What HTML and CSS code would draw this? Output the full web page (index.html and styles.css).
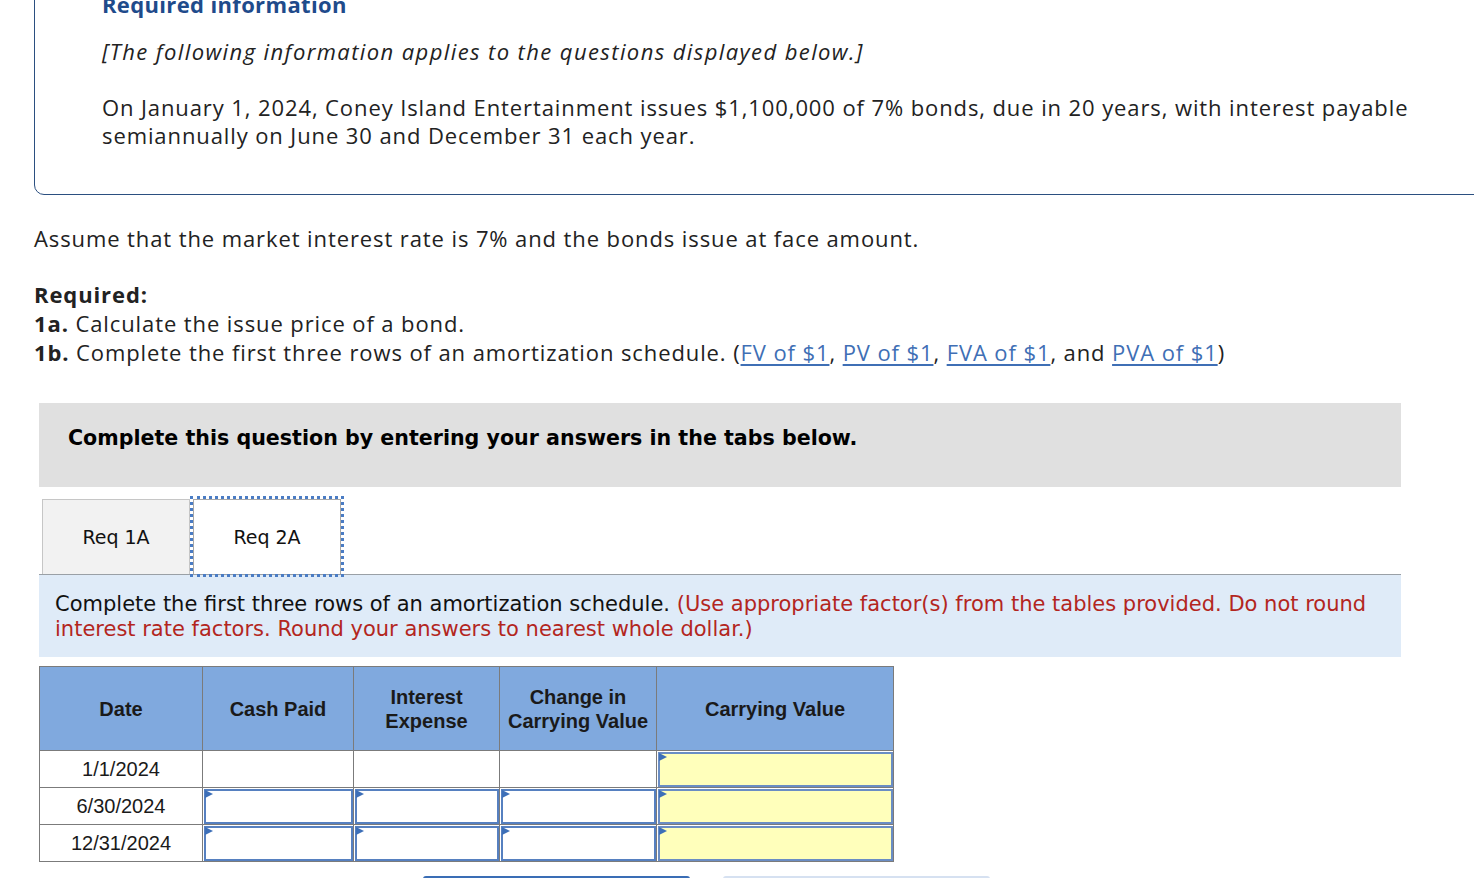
FILE: index.html
```html
<!DOCTYPE html>
<html>
<head>
<meta charset="utf-8">
<link rel="stylesheet" href="styles.css">
</head>
<body>
<div class="req-box">
  <h2 class="req-title">Required information</h2>
  <p class="req-note">[The following information applies to the questions displayed below.]</p>
  <p class="req-text">On January 1, 2024, Coney Island Entertainment issues $1,100,000 of 7% bonds, due in 20 years, with interest payable<br>semiannually on June 30 and December 31 each year.</p>
</div>

<p class="assume">Assume that the market interest rate is 7% and the bonds issue at face amount.</p>

<div class="required">
  <div class="bold">Required:</div>
  <div><b>1a.</b> Calculate the issue price of a bond.</div>
  <div><b>1b.</b> Complete the first three rows of an amortization schedule. (<a href="#">FV of $1</a>, <a href="#">PV of $1</a>, <a href="#">FVA of $1</a>, and <a href="#">PVA of $1</a>)</div>
</div>

<div class="panel">
  <div class="panel-head">Complete this question by entering your answers in the tabs below.</div>
  <div class="tabs">
    <div class="tab">Req 1A</div>
    <div class="tab active">Req 2A</div>
  </div>
  <div class="instr">Complete the first three rows of an amortization schedule. <span class="red">(Use appropriate factor(s) from the tables provided. Do not round<br>interest rate factors. Round your answers to nearest whole dollar.)</span></div>

  <table class="sched">
    <thead>
      <tr>
        <th class="c1">Date</th>
        <th class="c2">Cash Paid</th>
        <th class="c3">Interest<br>Expense</th>
        <th class="c4">Change in<br>Carrying Value</th>
        <th class="c5">Carrying Value</th>
      </tr>
    </thead>
    <tbody>
      <tr>
        <td class="date">1/1/2024</td>
        <td></td>
        <td></td>
        <td></td>
        <td class="in"><div class="field yellow"></div></td>
      </tr>
      <tr>
        <td class="date">6/30/2024</td>
        <td class="in"><div class="field"></div></td>
        <td class="in"><div class="field"></div></td>
        <td class="in"><div class="field"></div></td>
        <td class="in"><div class="field yellow"></div></td>
      </tr>
      <tr>
        <td class="date">12/31/2024</td>
        <td class="in"><div class="field"></div></td>
        <td class="in"><div class="field"></div></td>
        <td class="in"><div class="field"></div></td>
        <td class="in"><div class="field yellow"></div></td>
      </tr>
    </tbody>
  </table>

  <div class="nav">
    <div class="btn prev"></div>
    <div class="btn next"></div>
  </div>
</div>
</body>
</html>
```

FILE: styles.css
```css
html, body {
  margin: 0;
  padding: 0;
  background: #ffffff;
}
body {
  font-family: "Open Sans", "Lato", sans-serif;
  color: #222222;
  font-size: 22px;
  line-height: 28px;
  letter-spacing: 0.9px;
  overflow: hidden;
}
.req-box {
  margin: -25px -30px 0 34px;
  padding: 14px 40px 45px 67px;
  border: 1px solid #2b4f80;
  border-radius: 0 0 0 10px;
}
.req-title {
  margin: 0;
  font-size: 22px;
  line-height: 28px;
  font-weight: 700;
  letter-spacing: 0.35px;
  color: #1f4b8b;
}
.req-note {
  margin: 19px 0 0 0;
  font-style: italic;
  letter-spacing: 1.4px;
}
.req-text {
  margin: 28px 0 0 0;
}
.assume {
  margin: 29px 0 0 34px;
}
.required {
  margin: 28px 0 0 34px;
  line-height: 29px;
}
.bold, .required b {
  font-weight: 700;
}
.required a {
  color: #3f6fb5;
  text-decoration: underline;
  text-decoration-thickness: 2px;
  text-underline-offset: 3px;
}
.panel {
  margin: 36px 0 0 39px;
  width: 1362px;
  letter-spacing: normal;
}
.panel-head {
  background: #e0e0e0;
  height: 84px;
  box-sizing: border-box;
  padding: 22px 0 0 29px;
  font-family: "DejaVu Sans", Verdana, sans-serif;
  font-weight: 700;
  font-size: 20.6px;
  line-height: 26px;
  color: #000;
}
.tabs {
  display: flex;
  padding: 12px 0 0 3px;
  border-bottom: 1px solid #9aa0a6;
}
.tab {
  width: 148px;
  height: 75px;
  box-sizing: border-box;
  border: 1px solid #c6c6c6;
  border-bottom: none;
  background: #f2f2f2;
  display: flex;
  align-items: center;
  justify-content: center;
  font-family: "DejaVu Sans", Verdana, sans-serif;
  font-size: 19px;
  color: #111;
}
.tab.active {
  background: #ffffff;
  border-color: #a8a8a8;
  margin-left: 3px;
  outline: 3px dotted #4a7cc4;
}
.instr {
  background: #dfebf8;
  height: 82px;
  box-sizing: border-box;
  padding: 17px 20px 0 16px;
  font-family: "DejaVu Sans", Verdana, sans-serif;
  font-size: 21px;
  line-height: 25px;
  color: #111;
}
.red {
  color: #b3261e;
}
.sched {
  margin-top: 9px;
  border-collapse: collapse;
  font-family: "Liberation Sans", Arial, sans-serif;
  font-size: 20px;
  line-height: 22px;
  color: #1a1a1a;
}
.sched th, .sched td {
  border: 1px solid #7b7b7b;
  padding: 0;
}
.sched th {
  background: #80a9de;
  height: 83px;
  font-weight: 700;
  line-height: 24px;
  text-align: center;
}
.c1 { width: 162px; }
.c2 { width: 150px; }
.c3 { width: 145px; }
.c4 { width: 156px; }
.c5 { width: 236px; }
.sched tbody tr {
  height: 37px;
}
.sched td {
  text-align: center;
}
.sched td.in {
  padding: 1px 0 0 1px;
}
.field {
  position: relative;
  height: 35px;
  box-sizing: border-box;
  border: 2px solid #5680c0;
  background: #ffffff;
}
.field.yellow {
  background: #ffffbb;
  border-color: #6a8dc4;
}
.field::before {
  content: "";
  position: absolute;
  left: -1px;
  top: -1px;
  border-top: 4.5px solid transparent;
  border-bottom: 4.5px solid transparent;
  border-left: 8px solid #3d6fb8;
}
.nav {
  display: flex;
  gap: 33px;
  margin: 14px 0 0 384px;
}
.btn {
  width: 267px;
  height: 40px;
  border-radius: 3px;
}
.btn.prev { background: #3a6db5; }
.btn.next { background: #d6e1f1; }
```
